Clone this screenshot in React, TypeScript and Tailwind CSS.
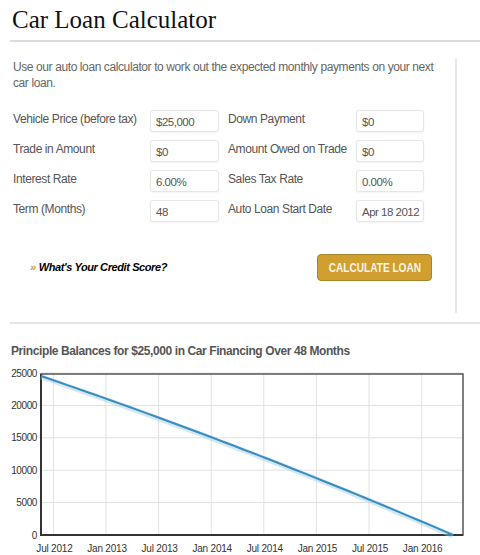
const leftFields = [
  { label: 'Vehicle Price (before tax)', value: '$25,000' },
  { label: 'Trade in Amount', value: '$0' },
  { label: 'Interest Rate', value: '6.00%' },
  { label: 'Term (Months)', value: '48' },
]

const rightFields = [
  { label: 'Down Payment', value: '$0' },
  { label: 'Amount Owed on Trade', value: '$0' },
  { label: 'Sales Tax Rate', value: '0.00%' },
  { label: 'Auto Loan Start Date', value: 'Apr 18 2012' },
]

// plot box in svg coords (svg starts at page y=365)
const TOP = 8
const BOTTOM = 169
const LEFT = 41
const RIGHT = 463
const PX_PER_MONTH = (453 - 41) / 47

function yOf(v: number) {
  return BOTTOM - (v / 25000) * (BOTTOM - TOP + 1)
}

function balances(principal: number, rate: number, months: number) {
  const r = rate / 12
  const pay = (principal * r) / (1 - Math.pow(1 + r, -months))
  const out: number[] = []
  let b = principal
  for (let i = 0; i < months; i++) {
    b = b * (1 + r) - pay
    out.push(Math.max(b, 0))
  }
  return out
}

function Field({ label, value, labelW, inputW }: { label: string; value: string; labelW: string; inputW: string }) {
  return (
    <div className="flex items-start">
      <div className={`${labelW} pt-px text-[12px] leading-4 text-[#555]`}>{label}</div>
      <div
        className={`${inputW} h-[22px] overflow-hidden whitespace-nowrap rounded-[3px] border border-[#e6e6e6] bg-white pl-[5px] text-[11.5px] leading-[22px] tracking-[-0.5px] text-[#555] shadow-[0_1px_2px_rgba(0,0,0,0.05)]`}
      >
        {value}
      </div>
    </div>
  )
}

function Chart() {
  const data = balances(25000, 0.06, 48)
  const pts = data.map((v, i) => `${(LEFT + i * PX_PER_MONTH).toFixed(1)},${yOf(v).toFixed(1)}`).join(' ')
  const yTicks = [25000, 20000, 15000, 10000, 5000, 0]
  const xLabels = ['Jul 2012', 'Jan 2013', 'Jul 2013', 'Jan 2014', 'Jul 2014', 'Jan 2015', 'Jul 2015', 'Jan 2016']
  const xFirst = LEFT + (1 + 13 / 31) * PX_PER_MONTH

  return (
    <svg width="480" height="190" viewBox="0 0 480 190" className="block">
      {yTicks.map((t) => (
        <g key={t}>
          <line x1={LEFT} x2={RIGHT} y1={yOf(t)} y2={yOf(t)} stroke="#e2e2e2" strokeWidth="1" />
          <text
            x="37"
            y={yOf(t) + 3.5}
            textAnchor="end"
            fontSize="10"
            fill="#333"
            fontFamily="'Liberation Sans', Arial, sans-serif"
          >
            {t}
          </text>
        </g>
      ))}
      {xLabels.map((l, i) => {
        const x = xFirst + i * 6 * PX_PER_MONTH
        return (
          <g key={l}>
            <line x1={x} x2={x} y1={TOP} y2={BOTTOM} stroke="#e2e2e2" strokeWidth="1" />
            <text
              x={x + 1}
              y="186"
              textAnchor="middle"
              fontSize="10"
              letterSpacing="-0.2"
              fill="#333"
              fontFamily="'Liberation Sans', Arial, sans-serif"
            >
              {l}
            </text>
          </g>
        )
      })}
      <rect x={LEFT} y={TOP} width={RIGHT - LEFT} height={BOTTOM - TOP} fill="none" stroke="#555" strokeWidth="1.5" />
      <line x1={LEFT} x2={LEFT} y1={TOP} y2={BOTTOM + 1} stroke="#333" strokeWidth="2" />
      <line x1={LEFT - 1} x2={RIGHT} y1={BOTTOM} y2={BOTTOM} stroke="#333" strokeWidth="2" />
      <polyline points={pts} fill="none" stroke="#9ccbe6" strokeOpacity="0.45" strokeWidth="5" transform="translate(0,1)" />
      <polyline points={pts} fill="none" stroke="#3a8bbf" strokeWidth="2" />
    </svg>
  )
}

export default function App() {
  return (
    <div className="h-[555px] w-[480px] overflow-hidden bg-white font-['Liberation_Sans',Arial,sans-serif] tracking-[-0.4px]">
      <h1 className="h-[35px] pl-[12px] pt-[5px] font-['Liberation_Serif','Times_New_Roman',serif] text-[25px] leading-[30px] tracking-normal text-[#111]">
        Car Loan Calculator
      </h1>
      <div className="ml-[10px] mt-[5px] border-t-2 border-[#dcdcdc]" />

      <section className="mt-[16px] w-[457px] border-r-2 border-[#e8e8e8] pb-[32px] pl-[13px] pt-px">
        <p className="w-[430px] text-[12px] leading-4 text-[#666]">
          Use our auto loan calculator to work out the expected monthly payments on your next car loan.
        </p>

        <div className="mt-[19px] flex gap-[9px]">
          <div className="flex flex-col gap-[8px]">
            {leftFields.map((f) => (
              <Field key={f.label} {...f} labelW="w-[137px]" inputW="w-[69px]" />
            ))}
          </div>
          <div className="flex flex-col gap-[8px]">
            {rightFields.map((f) => (
              <Field key={f.label} {...f} labelW="w-[128px]" inputW="w-[68px]" />
            ))}
          </div>
        </div>

        <div className="mt-[32px] flex items-center justify-between pl-[17px] pr-[23px]">
          <a className="text-[11px] font-bold italic text-black">
            <span className="mr-[3px] text-[#c9a03a]">»</span>What's Your Credit Score?
          </a>
          <button className="h-[27px] w-[115px] rounded-[4px] border border-[#a8842a] bg-[#d19f30] text-[12px] font-bold tracking-normal text-[#fbf5e4]">
            <span className="inline-block scale-x-[0.84]">CALCULATE LOAN</span>
          </button>
        </div>
      </section>

      <div className="ml-[10px] mt-[9px] border-t-2 border-[#e6e6e6]" />

      <h2 className="mt-[19px] pl-[11px] text-[12px] font-bold leading-4 text-[#555]">
        Principle Balances for $25,000 in Car Financing Over 48 Months
      </h2>
      <div className="mt-[7px]">
        <Chart />
      </div>
    </div>
  )
}
